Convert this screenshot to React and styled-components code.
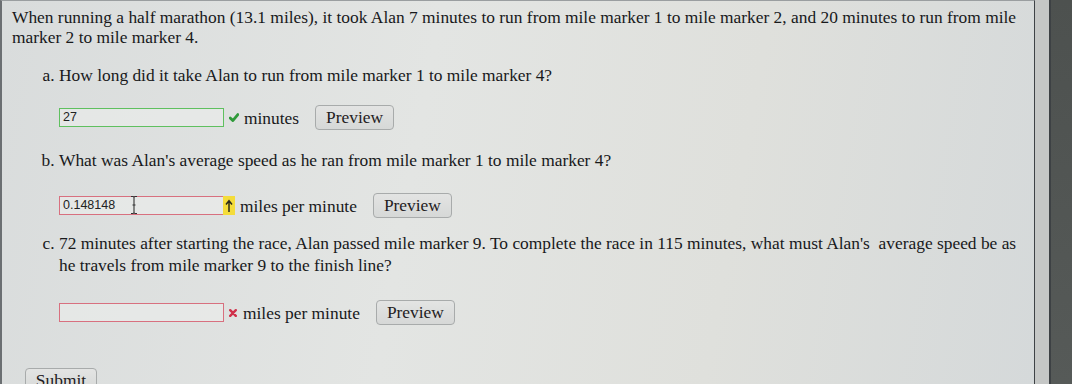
import React from "react";
import styled, { createGlobalStyle } from "styled-components";

const Global = createGlobalStyle`
  html, body { margin: 0; padding: 0; }
  body {
    width: 1072px;
    height: 384px;
    overflow: hidden;
    background: #4f5351;
    font-family: "Liberation Serif", "Times New Roman", serif;
    color: #18191b;
  }
`;

const Screen = styled.div`
  display: flex;
  width: 1072px;
  height: 384px;
`;

const Panel = styled.main`
  box-sizing: border-box;
  width: 1035px;
  height: 384px;
  border-left: 2px solid #6b6f72;
  border-right: 1px solid #3e4246;
  border-top: 1px solid #9a9ea0;
  background: linear-gradient(100deg, #d9dcdc 0%, #e3e5e3 40%, #dfe0dc 70%, #d5d9da 100%);
  padding: 6px 0 0 10px;
  overflow: hidden;
`;

const Strip = styled.div`
  width: 14px;
  height: 384px;
  background: #c5c7c6;
  border-right: 2px solid #3d4144;
`;

const Fill = styled.div`
  flex: 1;
  height: 384px;
  background: linear-gradient(180deg, #4d514f, #565a58);
`;

const Intro = styled.p`
  margin: 0;
  width: 1030px;
  font-size: 17.4px;
  line-height: 20px;
`;

const List = styled.ol`
  list-style: lower-alpha;
  margin: 17px 0 0 0;
  padding-left: 47px;
  font-size: 17.4px;
`;

const Item = styled.li`
  margin-bottom: ${(p) => p.$bottom || 14}px;
`;

const Question = styled.p`
  margin: 0;
  line-height: 22px;
  width: 960px;
`;

const Row = styled.div`
  display: flex;
  align-items: center;
  margin-top: ${(p) => p.$top || 23}px;
  height: 25px;
  position: relative;
`;

const Field = styled.div`
  box-sizing: border-box;
  width: 165px;
  height: 19px;
  border: 1px solid ${(p) => p.$border};
  background: rgba(236, 238, 236, 0.55);
  font-family: "Liberation Sans", Arial, sans-serif;
  font-size: 12.5px;
  line-height: 17px;
  padding-left: 3px;
  color: #222;
`;

const Mark = styled.span`
  display: inline-flex;
  align-items: center;
  justify-content: center;
  margin-left: ${(p) => p.$ml ?? 4}px;
  width: ${(p) => p.$w || 10}px;
  height: ${(p) => p.$h || 10}px;
  background: ${(p) => p.$bg || "transparent"};
`;

const Label = styled.span`
  margin-left: 5px;
  font-size: 17.4px;
  line-height: 20px;
`;

const Button = styled.button`
  box-sizing: border-box;
  margin-left: ${(p) => p.$ml || 16}px;
  height: 25px;
  padding: 0 10px;
  font-family: "Liberation Serif", "Times New Roman", serif;
  font-size: 17.4px;
  color: #1f2022;
  background: linear-gradient(180deg, #e3e4e3, #d6d8d7);
  border: 1px solid #a8abab;
  border-radius: 4px;
`;

const SubmitButton = styled(Button)`
  margin: 29px 0 0 13px;
  width: 72px;
  padding: 0;
`;

const Cursor = styled.svg`
  position: absolute;
  left: 70px;
  top: 2px;
`;

const Check = () => (
  <svg width="10" height="9" viewBox="0 0 10 9">
    <path d="M1.2 5 L3.8 7.6 L8.8 1.6" fill="none" stroke="#2f9a3a" strokeWidth="2.8" strokeLinecap="round" strokeLinejoin="round" />
  </svg>
);

const Cross = () => (
  <svg width="8" height="8" viewBox="0 0 8 8">
    <path d="M1.2 1.2 L6.8 6.8 M6.8 1.2 L1.2 6.8" stroke="#d0304a" strokeWidth="2.4" strokeLinecap="round" />
  </svg>
);

const Arrow = () => (
  <svg width="8" height="14" viewBox="0 0 8 14">
    <path d="M4 13 V2.5 M1 5.5 L4 1.8 L7 5.5" fill="none" stroke="#2a2a1a" strokeWidth="1.5" />
  </svg>
);

export default function App() {
  return (
    <>
      <Global />
      <Screen>
        <Panel>
          <Intro>
            When running a half marathon (13.1 miles), it took Alan 7 minutes to run from mile marker 1 to mile marker 2, and 20 minutes to run from mile marker 2 to mile marker 4.
          </Intro>
          <List>
            <Item $bottom={19}>
              <Question>How long did it take Alan to run from mile marker 1 to mile marker 4?</Question>
              <Row $top={19}>
                <Field $border="#5fc05f">27</Field>
                <Mark $ml={5}><Check /></Mark>
                <Label>minutes</Label>
                <Button>Preview</Button>
              </Row>
            </Item>
            <Item $bottom={14}>
              <Question>What was Alan's average speed as he ran from mile marker 1 to mile marker 4?</Question>
              <Row $top={22}>
                <Field $border="#d8707f">0.148148</Field>
                <Cursor width="10" height="20" viewBox="0 0 10 20">
                  <path d="M2 1.5 H4 Q5 1.5 5 3 V17 Q5 18.5 4 18.5 H2 M8 1.5 H6 Q5 1.5 5 3 M5 17 Q5 18.5 6 18.5 H8 M3.5 10 H6.5" fill="none" stroke="#333" strokeWidth="1.1" />
                </Cursor>
                <Mark $ml={-1} $w={12} $h={19} $bg="#f4dc3a"><Arrow /></Mark>
                <Label>miles per minute</Label>
                <Button>Preview</Button>
              </Row>
            </Item>
            <Item $bottom={0}>
              <Question>
                72 minutes after starting the race, Alan passed mile marker 9. To complete the race in 115 minutes, what must Alan's&nbsp; average speed be as he travels from mile marker 9 to the finish line?
              </Question>
              <Row $top={24}>
                <Field $border="#d8707f"></Field>
                <Mark $ml={4}><Cross /></Mark>
                <Label>miles per minute</Label>
                <Button>Preview</Button>
              </Row>
            </Item>
          </List>
          <SubmitButton>Submit</SubmitButton>
        </Panel>
        <Strip />
        <Fill />
      </Screen>
    </>
  );
}
